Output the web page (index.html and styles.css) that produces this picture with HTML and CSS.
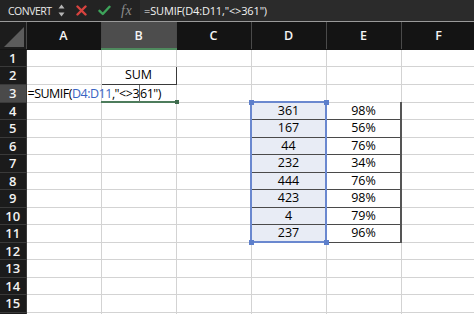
FILE: index.html
```html
<!DOCTYPE html>
<html>
<head>
<meta charset="utf-8">
<link rel="stylesheet" href="styles.css">
</head>
<body>
<div class="app">
  <div class="fbar">
    <div class="namebox">
      <span class="name">CONVERT</span>
      <svg class="spin" width="7" height="13" viewBox="0 0 7 13"><path d="M3.5 0.5 L6.5 4.5 L0.5 4.5 Z" fill="#b5b5b5"/><path d="M3.5 12.5 L6.5 8.5 L0.5 8.5 Z" fill="#b5b5b5"/></svg>
    </div>
    <div class="actions">
      <svg class="ico" width="11" height="11" viewBox="0 0 11 11"><path d="M1.5 1.5 L9.5 9.5 M9.5 1.5 L1.5 9.5" stroke="#d8433f" stroke-width="2.4" stroke-linecap="round"/></svg>
      <svg class="ico" width="13" height="11" viewBox="0 0 13 11"><path d="M1.5 5.8 L4.8 9 L11.5 1.8" fill="none" stroke="#3da35a" stroke-width="2.4" stroke-linecap="round" stroke-linejoin="round"/></svg>
      <span class="fx">fx</span>
    </div>
    <div class="formula">=SUMIF(D4:D11,"&lt;&gt;361")</div>
  </div>
  <table class="grid">
    <colgroup><col class="rh"><col class="c"><col class="c"><col class="c"><col class="c"><col class="c"><col class="c"></colgroup>
    <thead>
      <tr><th class="corner"><svg width="22" height="22" viewBox="0 0 22 22"><path d="M1 21 L21 21 L21 1 Z" fill="#5c5c5c"/></svg></th><th>A</th><th class="hsel">B</th><th>C</th><th>D</th><th>E</th><th>F</th></tr>
    </thead>
    <tbody>
      <tr><th>1</th><td></td><td></td><td></td><td></td><td></td><td></td></tr>
      <tr><th>2</th><td></td><td class="box">SUM</td><td></td><td></td><td></td><td></td></tr>
      <tr><th class="rsel">3</th><td class="edit"><span class="etext">=SUMIF(<span class="ref">D4:D11</span>,"&lt;&gt;3<span class="caret"></span>61")</span></td><td class="active"></td><td></td><td></td><td></td><td></td></tr>
      <tr><th>4</th><td></td><td></td><td></td><td class="rng first">361</td><td class="pct">98%</td><td></td></tr>
      <tr><th>5</th><td></td><td></td><td></td><td class="rng">167</td><td class="pct">56%</td><td></td></tr>
      <tr><th>6</th><td></td><td></td><td></td><td class="rng">44</td><td class="pct">76%</td><td></td></tr>
      <tr><th>7</th><td></td><td></td><td></td><td class="rng">232</td><td class="pct">34%</td><td></td></tr>
      <tr><th>8</th><td></td><td></td><td></td><td class="rng">444</td><td class="pct">76%</td><td></td></tr>
      <tr><th>9</th><td></td><td></td><td></td><td class="rng">423</td><td class="pct">98%</td><td></td></tr>
      <tr><th>10</th><td></td><td></td><td></td><td class="rng">4</td><td class="pct">79%</td><td></td></tr>
      <tr><th>11</th><td></td><td></td><td></td><td class="rng last">237</td><td class="pct">96%</td><td></td></tr>
      <tr><th>12</th><td></td><td></td><td></td><td></td><td></td><td></td></tr>
      <tr><th>13</th><td></td><td></td><td></td><td></td><td></td><td></td></tr>
      <tr><th>14</th><td></td><td></td><td></td><td></td><td></td><td></td></tr>
      <tr><th>15</th><td></td><td></td><td></td><td></td><td></td><td></td></tr>
      <tr><th></th><td></td><td></td><td></td><td></td><td></td><td></td></tr>
    </tbody>
  </table>
</div>
</body>
</html>
```
FILE: styles.css
```css
html, body {
  margin: 0;
  padding: 0;
  background: #1c1c1c;
  overflow: hidden;
}
.app {
  width: 474px;
  height: 314px;
  overflow: hidden;
  font-family: "Open Sans", "Liberation Sans", sans-serif;
}
.fbar {
  display: flex;
  align-items: center;
  height: 21px;
  background: #232323;
  border-bottom: 1px solid #9a9a9a;
}
.namebox {
  display: flex;
  align-items: center;
  width: 70px;
  padding-left: 8px;
  box-sizing: border-box;
  height: 100%;
}
.name {
  color: #e8e8e8;
  font-size: 10.5px;
  letter-spacing: -0.5px;
}
.spin {
  margin-left: 6px;
}
.actions {
  display: flex;
  align-items: center;
  width: 70px;
  height: 100%;
  padding-left: 6px;
  box-sizing: border-box;
}
.actions .ico:first-child {
  margin-right: 11px;
}
.actions .ico + .ico {
  margin-right: 10px;
}
.fx {
  font-family: "Liberation Serif", serif;
  font-style: italic;
  color: #8c8c8c;
  font-size: 14px;
  letter-spacing: 0.5px;
}
.formula {
  flex: 1;
  height: 100%;
  display: flex;
  align-items: center;
  background: #2b2b2b;
  color: #f2f2f2;
  font-size: 11px;
  padding-left: 4px;
  letter-spacing: -0.15px;
}
.grid {
  border-collapse: collapse;
  table-layout: fixed;
  width: 476px;
  margin-top: 0;
  background: #ffffff;
  font-size: 12.5px;
  color: #000;
}
col.rh { width: 26px; }
col.c { width: 75px; }
thead th {
  height: 26px;
  padding: 0;
  background: #141414;
  color: #f5f5f5;
  font-weight: 600;
  font-size: 12.5px;
  border-left: 1px solid #4a4a4a;
  border-right: 1px solid #4a4a4a;
  border-bottom: 1px solid #141414;
}
thead th.corner {
  background: #1c1c1c;
  border-left: none;
  text-align: right;
  vertical-align: bottom;
  line-height: 0;
}
thead th.corner svg { margin: 0 1px 1px 0; }
thead th.hsel {
  background: #4d4d4d;
  border-bottom: 2px solid #4f8a5e;
}
tbody tr { height: 17.5px; }
tbody th {
  padding: 0;
  background: #1b1b1b;
  color: #f2f2f2;
  font-weight: 600;
  font-size: 13px;
  border-bottom: 1px solid #3a3a3a;
  border-right: 1px solid #3a3a3a;
  line-height: 16px;
}
tbody th.rsel { background: #4a4a4a; }
td {
  padding: 0;
  border: 1px solid #d3d3d3;
  text-align: center;
  white-space: nowrap;
  line-height: 16px;
  color: #000;
}
td.box {
  border: 1px solid #3a3a3a;
}
td.edit {
  text-align: left;
  overflow: visible;
  padding-left: 1px;
}
.etext {
  font-size: 12.5px;
  letter-spacing: -0.5px;
}
.ref { color: #3a63c2; }
.caret {
  display: inline-block;
  width: 0;
  height: 17px;
  border-left: 1px solid #6a6a6a;
  vertical-align: -4px;
}
td.active {
  position: relative;
  border-bottom: 2px solid #4d7c5c;
}
td.active::after {
  content: "";
  position: absolute;
  right: -3px;
  bottom: -3px;
  width: 4px;
  height: 4px;
  background: #3f6b4d;
}
td.rng {
  position: relative;
  background: #e8ecf5;
  border-top: 1px solid #4a4a4a;
  border-bottom: 1px solid #4a4a4a;
  border-left: 2px solid #6a88cf;
  border-right: 2px solid #6a88cf;
}
td.rng.first { border-top: 2px solid #6a88cf; }
td.rng.last { border-bottom: 2px solid #6a88cf; }
td.rng.first::before, td.rng.first::after,
td.rng.last::before, td.rng.last::after {
  content: "";
  position: absolute;
  width: 5px;
  height: 5px;
  background: #5d7fcb;
}
td.rng.first::before { left: -3px; top: -3px; }
td.rng.first::after { right: -4px; top: -3px; }
td.rng.last::before { left: -3px; bottom: -4px; }
td.rng.last::after { right: -4px; bottom: -4px; }
td.pct {
  border: 1px solid #4a4a4a;
  border-right: 2px solid #555;
}
```
